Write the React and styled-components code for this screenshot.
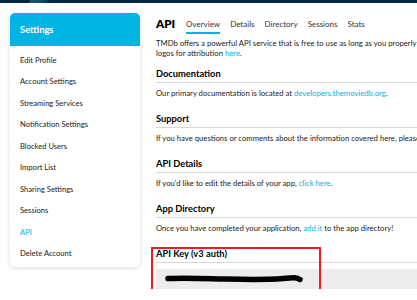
import React from "react";
import styled, { createGlobalStyle } from "styled-components";

const GlobalStyle = createGlobalStyle`
  html, body {
    margin: 0;
    padding: 0;
    background: #fff;
    overflow: hidden;
  }
  body {
    font-family: Lato, "Liberation Sans", sans-serif;
    color: #000;
  }
`;

const TopBar = styled.div`
  height: 3px;
  background: linear-gradient(110deg, #032541 0px, #032541 27px, #1d5b7e 30px, #0d3b5c 44px, #032541 47px, #032541 100%);
`;

const Page = styled.div`
  display: flex;
  align-items: flex-start;
  gap: 16px;
  padding: 10px 0 0 10px;
  width: 700px;
`;

const Card = styled.div`
  width: 130px;
  flex: none;
  border-radius: 5px;
  overflow: hidden;
  background: #fff;
  box-shadow: 0 1px 5px rgba(0, 0, 0, 0.14);
`;

const CardHeader = styled.div`
  background: #01b4e4;
  color: #fff;
  font-weight: 700;
  font-size: 9.4px;
  height: 33px;
  line-height: 33px;
  padding-left: 10px;
`;

const Menu = styled.ul`
  list-style: none;
  margin: 0;
  padding: 4px 0 3px;
`;

const MenuItem = styled.li`
  font-size: 7.6px;
  height: 21.44px;
  line-height: 21.44px;
  padding-left: 10px;
  color: ${(p) => (p.$active ? "#01b4e4" : "#1a1a1a")};
`;

const Main = styled.div`
  flex: 1;
  position: relative;
  padding-top: 2px;
`;

const TitleRow = styled.div`
  display: flex;
  align-items: flex-start;
  gap: 11px;
  height: 22px;
`;

const Title = styled.h2`
  margin: 0;
  font-size: 11.5px;
  font-weight: 800;
  line-height: 18px;
`;

const Tabs = styled.div`
  display: flex;
  gap: 10px;
  padding-top: 3px;
`;

const Tab = styled.span`
  font-size: 8px;
  line-height: 13px;
  padding-bottom: 1px;
  color: #333;
  border-bottom: 2px solid ${(p) => (p.$active ? "#01b4e4" : "transparent")};
`;

const Text = styled.p`
  margin: ${(p) => (p.$intro ? "1px 0 0" : "5.5px 0 0")};
  font-size: 7.7px;
  line-height: 10px;
  color: #222;
  white-space: nowrap;
`;

const Link = styled.a`
  color: #01b4e4;
  text-decoration: none;
`;

const Section = styled.section`
  margin-top: ${(p) => (p.$first ? "10px" : "15px")};
`;

const Heading = styled.h3`
  margin: 0;
  font-size: 9.3px;
  font-weight: 700;
  line-height: 12px;
  padding-bottom: 1.5px;
  border-bottom: 1px solid #d7d7d7;
`;

const KeyBox = styled.div`
  margin-top: 6px;
  height: 20px;
  background: #ececec;
  display: flex;
  align-items: center;
  padding-left: 9px;
`;

const Highlight = styled.div`
  position: absolute;
  left: -5px;
  top: 234px;
  width: 166px;
  height: 41px;
  border: 2px solid #ee1c24;
  pointer-events: none;
`;

const menu = [
  "Edit Profile",
  "Account Settings",
  "Streaming Services",
  "Notification Settings",
  "Blocked Users",
  "Import List",
  "Sharing Settings",
  "Sessions",
  "API",
  "Delete Account",
];

const tabs = ["Overview", "Details", "Directory", "Sessions", "Stats"];

export default function App() {
  return (
    <>
      <GlobalStyle />
      <TopBar />
      <Page>
        <Card>
          <CardHeader>Settings</CardHeader>
          <Menu>
            {menu.map((m) => (
              <MenuItem key={m} $active={m === "API"}>
                {m}
              </MenuItem>
            ))}
          </Menu>
        </Card>
        <Main>
          <TitleRow>
            <Title>API</Title>
            <Tabs>
              {tabs.map((t, i) => (
                <Tab key={t} $active={i === 0}>
                  {t}
                </Tab>
              ))}
            </Tabs>
          </TitleRow>
          <Text $intro>
            TMDb offers a powerful API service that is free to use as long as you properly attribute us as the source of the data and/or images you use. You can find our
            <br />
            logos for attribution <Link href="#">here</Link>.
          </Text>

          <Section $first>
            <Heading>Documentation</Heading>
            <Text>
              Our primary documentation is located at <Link href="#">developers.themoviedb.org</Link>.
            </Text>
          </Section>

          <Section>
            <Heading>Support</Heading>
            <Text>
              If you have questions or comments about the information covered here, please create a post on our <Link href="#">support forums</Link>.
            </Text>
          </Section>

          <Section>
            <Heading>API Details</Heading>
            <Text>
              If you'd like to edit the details of your app, <Link href="#">click here</Link>.
            </Text>
          </Section>

          <Section>
            <Heading>App Directory</Heading>
            <Text>
              Once you have completed your application, <Link href="#">add it</Link> to the app directory!
            </Text>
          </Section>

          <Section>
            <Heading>API Key (v3 auth)</Heading>
            <KeyBox>
              <svg width="140" height="10" viewBox="0 0 140 10">
                <path
                  d="M3 4.5 C 20 3.5, 40 4.5, 60 5 S 100 6, 118 4.5 S 132 4.5, 135 5.5"
                  stroke="#000"
                  strokeWidth="5.5"
                  strokeLinecap="round"
                  fill="none"
                />
              </svg>
            </KeyBox>
          </Section>

          <Highlight />
        </Main>
      </Page>
    </>
  );
}
